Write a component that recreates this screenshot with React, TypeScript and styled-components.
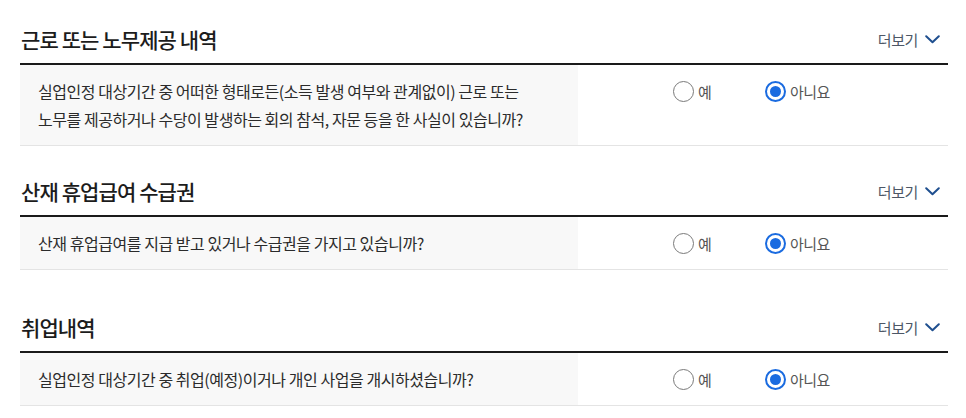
import React from 'react';
import styled, { createGlobalStyle } from 'styled-components';

const GlobalStyle = createGlobalStyle`
  html, body {
    margin: 0;
    padding: 0;
    background: #fff;
  }
  body {
    font-family: "Noto Sans CJK KR", "Noto Sans", sans-serif;
    color: #222;
  }
`;

const Page = styled.div`
  width: 928px;
  margin-left: 20px;
`;

const Section = styled.section<{ $space: number }>`
  margin-top: ${p => p.$space}px;
`;

const Heading = styled.div`
  display: flex;
  align-items: center;
  justify-content: space-between;
  padding-bottom: 10px;
  border-bottom: 2px solid #1a1a1a;
`;

const Title = styled.h2`
  margin: 0 0 0 1px;
  font-size: 21px;
  line-height: 28px;
  font-weight: 500;
  letter-spacing: -0.9px;
  color: #1c1c1c;
`;

const MoreButton = styled.button`
  display: flex;
  align-items: center;
  gap: 7px;
  margin-right: 8px;
  padding: 0;
  border: none;
  background: none;
  font-family: inherit;
  font-size: 15px;
  letter-spacing: -0.4px;
  color: #4d5766;
  cursor: pointer;

  svg {
    display: block;
  }
`;

const Row = styled.div`
  display: grid;
  grid-template-columns: 558px 1fr;
  border-bottom: 1px solid #e4e4e4;
`;

const Question = styled.div`
  background: #f8f8f8;
  padding: 12px 18px;
  font-size: 16px;
  line-height: 28px;
  letter-spacing: -0.45px;
  color: #2b2b2b;
`;

const Answers = styled.div`
  display: flex;
  align-items: flex-start;
  padding: 12px 0 0 95px;
`;

const Option = styled.label`
  display: flex;
  align-items: center;
  gap: 4px;
  width: 92px;
  height: 28px;
  font-size: 15px;
  letter-spacing: -0.6px;
  color: #555;
  cursor: pointer;
`;

const Circle = styled.span<{ $checked: boolean }>`
  box-sizing: border-box;
  width: 21px;
  height: 21px;
  border-radius: 50%;
  border: ${p => (p.$checked ? '2px solid #1a6be0' : '1.5px solid #7a7a7a')};
  background: #fff;
  display: flex;
  align-items: center;
  justify-content: center;

  &::after {
    content: '';
    width: 11px;
    height: 11px;
    border-radius: 50%;
    background: ${p => (p.$checked ? '#1a6be0' : 'transparent')};
  }
`;

const Chevron = () => (
  <svg width="15" height="9" viewBox="0 0 15 9" fill="none">
    <path d="M1.2 1.2 L7.5 7.3 L13.8 1.2" stroke="#1f4f8f" strokeWidth="2" strokeLinecap="round" strokeLinejoin="round" />
  </svg>
);

const sections = [
  {
    title: '근로 또는 노무제공 내역',
    space: 25,
    question: ['실업인정 대상기간 중 어떠한 형태로든(소득 발생 여부와 관계없이) 근로 또는', '노무를 제공하거나 수당이 발생하는 회의 참석, 자문 등을 한 사실이 있습니까?'],
  },
  {
    title: '산재 휴업급여 수급권',
    space: 31,
    question: ['산재 휴업급여를 지급 받고 있거나 수급권을 가지고 있습니까?'],
  },
  {
    title: '취업내역',
    space: 43,
    question: ['실업인정 대상기간 중 취업(예정)이거나 개인 사업을 개시하셨습니까?'],
  },
];

const App: React.FC = () => (
  <>
    <GlobalStyle />
    <Page>
      {sections.map((s, i) => (
        <Section key={i} $space={s.space}>
          <Heading>
            <Title>{s.title}</Title>
            <MoreButton>
              더보기
              <Chevron />
            </MoreButton>
          </Heading>
          <Row>
            <Question>
              {s.question.map((line, j) => (
                <div key={j}>{line}</div>
              ))}
            </Question>
            <Answers>
              <Option>
                <Circle $checked={false} />
                예
              </Option>
              <Option>
                <Circle $checked />
                아니요
              </Option>
            </Answers>
          </Row>
        </Section>
      ))}
    </Page>
  </>
);

export default App;
